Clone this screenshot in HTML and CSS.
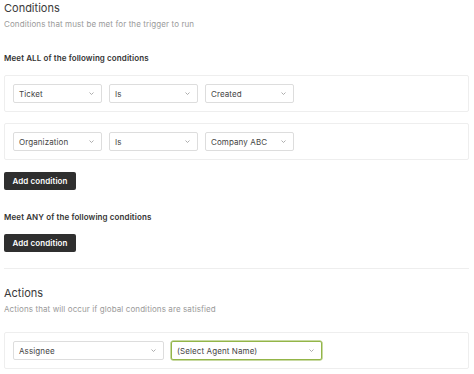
FILE: index.html
```html
<!DOCTYPE html>
<html lang="en">
<head>
<meta charset="UTF-8">
<meta name="viewport" content="width=device-width, initial-scale=1.0">
<title>Trigger conditions</title>
<link rel="stylesheet" href="styles.css">
</head>
<body>
<div class="pagina">
    <h2 class="titulo">Conditions</h2>
    <p class="subtitulo">Conditions that must be met for the trigger to run</p>

    <p class="grupo-label">Meet ALL of the following conditions</p>
    <div class="fila-caja">
        <div class="selector"><span>Ticket</span><svg class="flecha" width="5" height="3" viewBox="0 0 5 3"><path d="M0.5 0.5 L2.5 2.5 L4.5 0.5" fill="none" stroke="#999" stroke-width="0.8"/></svg></div>
        <div class="selector"><span>Is</span><svg class="flecha" width="5" height="3" viewBox="0 0 5 3"><path d="M0.5 0.5 L2.5 2.5 L4.5 0.5" fill="none" stroke="#999" stroke-width="0.8"/></svg></div>
        <div class="selector"><span>Created</span><svg class="flecha" width="5" height="3" viewBox="0 0 5 3"><path d="M0.5 0.5 L2.5 2.5 L4.5 0.5" fill="none" stroke="#999" stroke-width="0.8"/></svg></div>
    </div>
    <div class="fila-caja">
        <div class="selector"><span>Organization</span><svg class="flecha" width="5" height="3" viewBox="0 0 5 3"><path d="M0.5 0.5 L2.5 2.5 L4.5 0.5" fill="none" stroke="#999" stroke-width="0.8"/></svg></div>
        <div class="selector"><span>Is</span><svg class="flecha" width="5" height="3" viewBox="0 0 5 3"><path d="M0.5 0.5 L2.5 2.5 L4.5 0.5" fill="none" stroke="#999" stroke-width="0.8"/></svg></div>
        <div class="selector"><span>Company ABC</span><svg class="flecha" width="5" height="3" viewBox="0 0 5 3"><path d="M0.5 0.5 L2.5 2.5 L4.5 0.5" fill="none" stroke="#999" stroke-width="0.8"/></svg></div>
    </div>
    <button class="boton">Add condition</button>

    <p class="grupo-label grupo-any">Meet ANY of the following conditions</p>
    <button class="boton boton-any">Add condition</button>

    <hr class="separador">

    <h2 class="titulo">Actions</h2>
    <p class="subtitulo">Actions that will occur if global conditions are satisfied</p>
    <div class="fila-caja fila-acciones">
        <div class="selector selector-ancho"><span>Assignee</span><svg class="flecha" width="5" height="3" viewBox="0 0 5 3"><path d="M0.5 0.5 L2.5 2.5 L4.5 0.5" fill="none" stroke="#999" stroke-width="0.8"/></svg></div>
        <div class="selector selector-ancho activo"><span>(Select Agent Name)</span><svg class="flecha" width="5" height="3" viewBox="0 0 5 3"><path d="M0.5 0.5 L2.5 2.5 L4.5 0.5" fill="none" stroke="#999" stroke-width="0.8"/></svg></div>
    </div>
</div>
</body>
</html>
```

FILE: styles.css
```css
body {
    margin: 0;
    background: #fff;
    font-family: Inter, "Liberation Sans", sans-serif;
    color: #333;
    letter-spacing: 0.1px;
}

.pagina {
    padding: 0 5px 0 4px;
}

.titulo {
    margin: 0;
    font-size: 11px;
    line-height: 16px;
    font-weight: 400;
    color: #3a3a3a;
    letter-spacing: 0;
}

.subtitulo {
    margin: 2px 0 0;
    font-size: 8px;
    line-height: 12px;
    color: #9a9a9a;
}

.grupo-label {
    margin: 22px 0 11px;
    font-size: 8px;
    line-height: 12px;
    font-weight: 600;
    color: #333;
}

.grupo-any {
    margin-top: 21px;
}

.fila-caja {
    display: flex;
    gap: 7px;
    padding: 8px;
    border: 1px solid #eee;
    border-radius: 2px;
    margin-bottom: 11px;
}

.fila-acciones {
    margin-top: 17px;
    margin-bottom: 0;
}

.selector {
    width: 89px;
    height: 19px;
    box-sizing: border-box;
    border: 1px solid #ddd;
    border-radius: 2px;
    display: flex;
    align-items: center;
    justify-content: space-between;
    padding: 0 7px 0 5px;
    font-size: 8px;
    color: #444;
}

.selector-ancho {
    width: 151px;
}

.selector.activo {
    border-color: #93b548;
    box-shadow: 0 0 0 0.5px #93b548;
}

.boton {
    display: block;
    width: 72px;
    height: 18px;
    margin-top: 12px;
    padding: 0;
    border: none;
    border-radius: 2px;
    background: #2f2f2f;
    color: #fff;
    font-family: inherit;
    font-size: 8px;
    font-weight: 600;
    letter-spacing: 0.1px;
}

.boton-any {
    margin-top: 0;
}

.separador {
    margin: 16px 0 16px;
    border: none;
    border-top: 1px solid #eee;
}
```
